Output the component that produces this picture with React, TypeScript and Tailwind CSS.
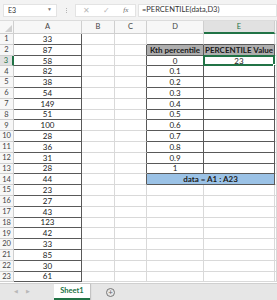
import { Fragment } from 'react';

const VALUES = [33, 87, 58, 82, 38, 54, 149, 51, 100, 28, 36, 31, 28, 44, 23, 27, 43, 123, 42, 33, 85, 30, 61];
const KTH = ['0', '0.1', '0.2', '0.3', '0.4', '0.5', '0.6', '0.7', '0.8', '0.9', '1'];
const COLS = ['A', 'B', 'C', 'D', 'E', ''];

const GRID = '#d9d9d9';
const DARK = '#595959';

// boxed regions: column A rows 1-23, table D2:E14
const inBox = (r: number, c: number) =>
  (c === 0 && r >= 1 && r <= 23) || ((c === 3 || c === 4) && r >= 2 && r <= 14);

const cellText = (r: number, c: number) => {
  if (c === 0) return String(VALUES[r - 1]);
  if (r === 2 && c === 3) return 'Kth percentile';
  if (r === 2 && c === 4) return 'PERCENTILE Value';
  if (c === 3 && r >= 3 && r <= 13) return KTH[r - 3];
  if (c === 4 && r === 3) return '23';
  return '';
};

export default function App() {
  const rows = Array.from({ length: 23 }, (_, i) => i + 1);

  return (
    <div className="w-[277px] h-[300px] overflow-hidden bg-white font-['Lato',sans-serif] text-[#222] flex flex-col">
      {/* formula bar */}
      <div className="h-[21px] shrink-0 bg-[#f3f3f3] flex items-center pl-[3px] gap-[2px] border-b border-[#dcdcdc]">
        <div className="w-[54px] h-[13px] bg-white border border-[#e3e3e3] flex items-center justify-between px-[4px] text-[7px] text-[#333]">
          <span>E3</span>
          <span className="text-[5px] text-[#777]">▼</span>
        </div>
        <div className="w-[14px] flex flex-col items-center gap-[1px]">
          <span className="w-[1px] h-[1px] bg-[#b5b5b5]" />
          <span className="w-[1px] h-[1px] bg-[#b5b5b5]" />
          <span className="w-[1px] h-[1px] bg-[#b5b5b5]" />
        </div>
        <div className="w-[61px] h-[13px] bg-white border border-[#e3e3e3] flex items-center justify-around text-[#b8b8b8] text-[8px]">
          <span>✕</span>
          <span>✓</span>
          <span className="italic font-['Liberation_Serif',serif] text-[#666] text-[7px]">fx</span>
        </div>
        <div className="flex-1 h-[13px] bg-white border border-[#e3e3e3] flex items-center pl-[3px] text-[7.5px] text-[#333]">
          =PERCENTILE(data,D3)
        </div>
      </div>

      {/* sheet */}
      <div className="flex-1 grid grid-cols-[14px_68px_33px_32px_57px_71px_1fr] grid-rows-[13px_repeat(23,10.8px)] content-start text-[8px]">
        {/* header row */}
        <div className="bg-[#f7f7f7] border-r border-b border-[#cfcfcf] relative">
          <span className="absolute right-[1px] bottom-[1px] w-0 h-0 border-l-[7px] border-l-transparent border-b-[7px] border-b-[#d0d0d0]" />
        </div>
        {COLS.map((c, i) => (
          <div
            key={c + i}
            className={
              c === 'E'
                ? 'bg-[#e1e1e1] border-r border-[#cfcfcf] border-b-2 border-b-[#217346] flex items-center justify-center text-[#217346] text-[7.5px]'
                : 'bg-[#f7f7f7] border-r border-b border-[#cfcfcf] flex items-center justify-center text-[#444] text-[7.5px]'
            }
          >
            {c}
          </div>
        ))}

        {rows.map((r) => (
          <Fragment key={r}>
            <div
              className={
                r === 3
                  ? 'bg-[#e1e1e1] border-r-2 border-r-[#217346] border-b border-[#cfcfcf] flex items-center justify-center text-[#217346] text-[7.5px]'
                  : 'bg-[#f7f7f7] border-r border-b border-[#cfcfcf] flex items-center justify-center text-[#444] text-[7.5px]'
              }
            >
              {r}
            </div>
            {COLS.map((_, c) => {
              if (r === 14 && c === 4) return null;
              const boxed = inBox(r, c);
              const rightDark = boxed || inBox(r, c + 1);
              const bottomDark = boxed || inBox(r + 1, c);
              const merged = r === 14 && c === 3;
              const header = r === 2 && (c === 3 || c === 4);
              const bg = merged ? '#9bc2e6' : header ? '#aeaeae' : '#ffffff';
              return (
                <div
                  key={c}
                  className={`relative flex items-center justify-center whitespace-nowrap overflow-visible ${merged ? 'col-span-2' : ''} ${
                    merged || header ? 'font-bold text-[#1a1a1a]' : ''
                  }`}
                  style={{
                    background: bg,
                    borderRight: `1px solid ${rightDark ? DARK : GRID}`,
                    borderBottom: `1px solid ${bottomDark ? DARK : GRID}`,
                  }}
                >
                  {merged ? 'data = A1 : A23' : cellText(r, c)}
                  {r === 3 && c === 4 && (
                    <>
                      <span className="absolute -left-[1px] -top-[1px] -right-[1px] -bottom-[1px] border-2 border-[#217346]" />
                      <span className="absolute -right-[3px] -bottom-[3px] w-[4px] h-[4px] bg-[#217346] border border-white" />
                    </>
                  )}
                </div>
              );
            })}
          </Fragment>
        ))}
      </div>

      {/* sheet tabs */}
      <div className="h-[17px] shrink-0 bg-[#e6e6e6] border-t border-[#d0d0d0] flex items-stretch">
        <div className="w-[54px] flex items-center gap-[8px] pl-[14px] text-[5px] text-[#b8b8b8]">
          <span>◀</span>
          <span>▶</span>
        </div>
        <div className="w-[36px] bg-white flex items-center justify-center text-[7.5px] font-bold text-[#217346] border-b-2 border-[#217346] shadow-[1px_0_1px_rgba(0,0,0,0.15)]">
          Sheet1
        </div>
        <div className="ml-[16px] flex items-center">
          <span className="w-[9px] h-[9px] rounded-full border border-[#777] flex items-center justify-center text-[8px] leading-none text-[#666]">
            +
          </span>
        </div>
      </div>
    </div>
  );
}
